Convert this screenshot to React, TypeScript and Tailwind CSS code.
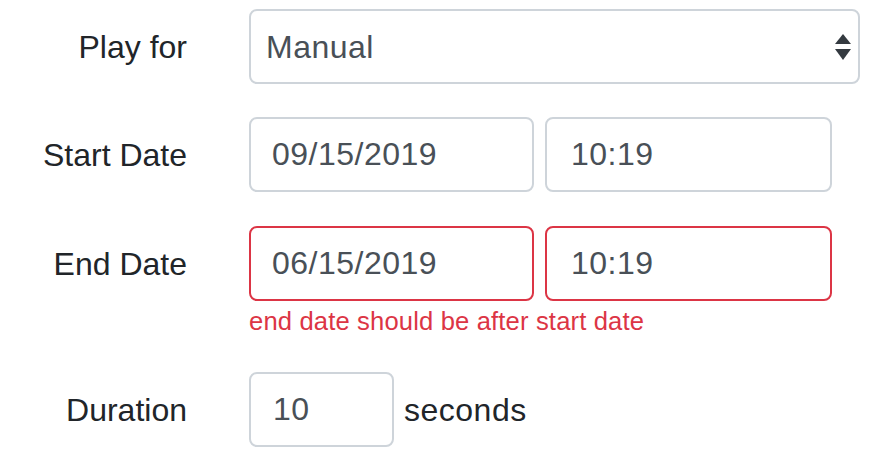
import { useState } from "react";

function SelectArrows() {
  return (
    <svg
      className="pointer-events-none absolute right-[9px] top-1/2 -translate-y-1/2"
      width="16"
      height="26"
      viewBox="0 0 16 26"
      aria-hidden="true"
    >
      <path d="M8 0 L16 10 L0 10 Z" fill="#343a40" />
      <path d="M0 15 L16 15 L8 26 Z" fill="#343a40" />
    </svg>
  );
}

function Label({ children }: { children: React.ReactNode }) {
  return (
    <div className="flex h-[75px] w-[187px] shrink-0 items-center justify-end text-[32px] text-[#212529]">
      {children}
    </div>
  );
}

export default function App() {
  const [playFor, setPlayFor] = useState("Manual");
  const invalid = true;

  const inputBase =
    "h-[75px] rounded-lg border-2 bg-white text-[32px] tracking-[0.5px] text-[#495057] outline-none font-['Liberation_Sans',Arial,sans-serif]";
  const borderOk = "border-[#ced4da]";
  const borderBad = "border-[#dc3545]";

  return (
    <div className="min-h-screen bg-white pt-[9px] font-['Liberation_Sans',Arial,sans-serif]">
      {/* Play for */}
      <div className="flex items-start gap-[62px]">
        <Label>Play for</Label>
        <div className="relative w-[611px]">
          <select
            value={playFor}
            onChange={(e) => setPlayFor(e.target.value)}
            className={`${inputBase} ${borderOk} w-full appearance-none rounded-[10px] pl-[15px] pr-10`}
          >
            <option>Manual</option>
            <option>Schedule</option>
          </select>
          <SelectArrows />
        </div>
      </div>

      {/* Start Date */}
      <div className="mt-[33px] flex items-start gap-[62px]">
        <Label>Start Date</Label>
        <div className="flex gap-[11px]">
          <input
            readOnly
            value="09/15/2019"
            className={`${inputBase} ${borderOk} w-[285px] pl-[21px]`}
          />
          <input
            readOnly
            value="10:19"
            className={`${inputBase} ${borderOk} w-[287px] pl-[24px]`}
          />
        </div>
      </div>

      {/* End Date */}
      <div className="mt-[34px] flex items-start gap-[62px]">
        <Label>End Date</Label>
        <div>
          <div className="flex gap-[11px]">
            <input
              readOnly
              value="06/15/2019"
              className={`${inputBase} ${invalid ? borderBad : borderOk} w-[285px] pl-[21px]`}
            />
            <input
              readOnly
              value="10:19"
              className={`${inputBase} ${invalid ? borderBad : borderOk} w-[287px] pl-[24px]`}
            />
          </div>
          {invalid && (
            <div className="mt-[6px] text-[25.6px] leading-[28px] tracking-[0.15px] text-[#dc3545]">
              end date should be after start date
            </div>
          )}
        </div>
      </div>

      {/* Duration */}
      <div className="mt-[37px] flex items-start gap-[62px]">
        <Label>Duration</Label>
        <div className="flex h-[75px] items-center">
          <input
            readOnly
            value="10"
            className={`${inputBase} ${borderOk} w-[145px] pl-[22px]`}
          />
          <span className="ml-[10px] text-[32px] tracking-[0.5px] text-[#212529]">seconds</span>
        </div>
      </div>
    </div>
  );
}
